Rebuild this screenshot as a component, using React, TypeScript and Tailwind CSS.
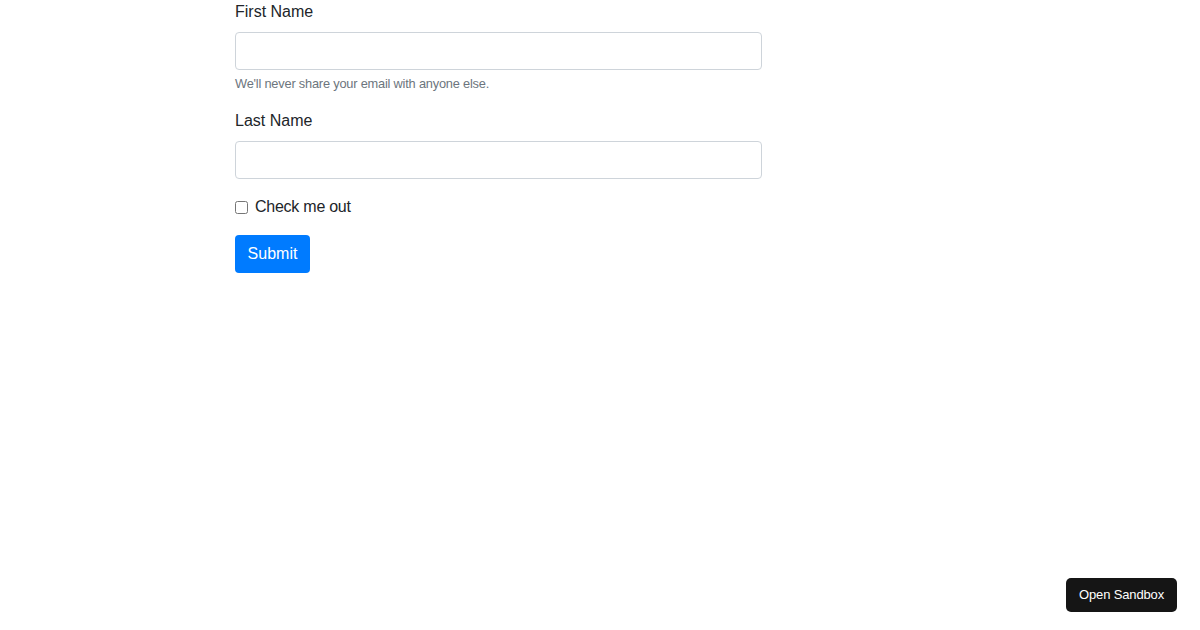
export default function App() {
  return (
    <div className="min-h-[630px] bg-white font-['Liberation_Sans',Arial,sans-serif] text-base leading-6 text-[#212529]">
      <form className="ml-[235px] w-[527px]" onSubmit={(e) => e.preventDefault()}>
        {/* First name */}
        <div className="mb-4">
          <label htmlFor="firstName" className="mb-2 inline-block">
            First Name
          </label>
          <input
            id="firstName"
            type="text"
            className="block h-[38px] w-full rounded border border-[#ced4da] bg-white px-3 py-1.5 text-base text-[#495057] outline-none"
          />
          <small className="mt-1 block text-[12.8px] leading-[19.2px] tracking-[-0.2px] text-[#6c757d]">
            We'll never share your email with anyone else.
          </small>
        </div>

        {/* Last name */}
        <div className="mb-4">
          <label htmlFor="lastName" className="mb-2 inline-block">
            Last Name
          </label>
          <input
            id="lastName"
            type="text"
            className="block h-[38px] w-full rounded border border-[#ced4da] bg-white px-3 py-1.5 text-base text-[#495057] outline-none"
          />
        </div>

        {/* Checkbox */}
        <div className="mb-4 flex items-center">
          <input id="check" type="checkbox" className="m-0 h-[13px] w-[13px]" />
          <label htmlFor="check" className="ml-[7px] tracking-[-0.25px]">
            Check me out
          </label>
        </div>

        <button
          type="submit"
          className="h-[38px] w-[75px] rounded bg-[#007bff] text-base text-white"
        >
          Submit
        </button>
      </form>

      <button
        type="button"
        className="fixed right-[23px] bottom-[18px] h-[34px] rounded-[5px] bg-[#151515] px-[13px] text-[13px] tracking-[-0.15px] text-white"
      >
        Open Sandbox
      </button>
    </div>
  );
}
